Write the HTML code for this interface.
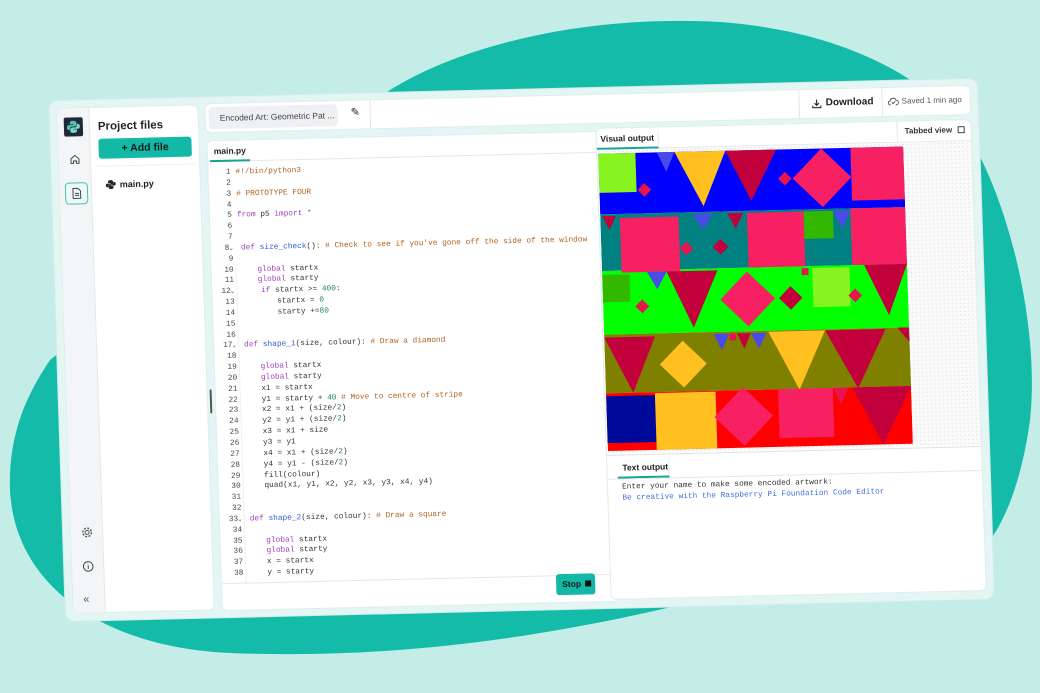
<!DOCTYPE html>
<html><head><meta charset="utf-8"><style>
*{box-sizing:border-box;margin:0;padding:0}
body{width:1040px;height:693px;overflow:hidden;background:#c4ede7;font-family:"Liberation Sans",sans-serif;position:relative}
#frame{position:absolute;left:0;top:0;width:930px;height:522px;transform-origin:0 0;transform:matrix(1,-0.0239,0.0326,1,48,100);background:#e4f6f4;border:1px solid #d2ece8;border-radius:10px}
.card{position:absolute;background:#fff;border-radius:5px;box-shadow:0 0 0 1px #dfeeed}
.mono{font-family:"Liberation Mono",monospace}
#code{position:absolute;left:0;top:24px;width:100%;height:418px;overflow:hidden;font-size:7.8px;line-height:10.84px;color:#333}
.ln{position:absolute;left:4px;width:18px;text-align:right;color:#444}
.cl{position:absolute;left:27px;white-space:pre}
.k{color:#9b3eb8}.f{color:#3355dd}.c{color:#b0611e}.n{color:#1f7f55}
</style></head><body>
<svg width="1040" height="693" style="position:absolute;left:0;top:0">
<path d="M390 90 C470 40 600 15 720 22 C830 30 920 70 965 130 C1010 200 1040 330 1030 420 C1022 480 1005 520 990 540 L700 600 C560 635 400 660 230 653 C110 648 15 590 10 490 C8 430 30 390 50 360 Z" fill="#14bba8"/>
</svg>
<div id="frame">
 <div class="card" style="left:8px;top:8px;width:140px;height:504px;overflow:hidden">
  <div style="position:absolute;left:0;top:0;width:32px;height:100%;background:#f4f5f7;border-right:1px solid #e6e8eb"></div>
  <div style="position:absolute;left:6px;top:9px;width:19px;height:19px;background:#1f2937;border-radius:2px">
   <svg width="19" height="19" viewBox="0 0 19 19"><path d="M9 3.5c-2 0-3 .8-3 2v1.5h3.5v.6H5c-1.3 0-2 1-2 2.4s.7 2.6 2 2.6h1v-1.6c0-1.1.9-2 2-2h3c1 0 1.6-.7 1.6-1.6V5.5c0-1.2-1.3-2-3.6-2z" fill="#4fc3b0"/><path d="M10 15.5c2 0 3-.8 3-2V12H9.5v-.6H14c1.3 0 2-1 2-2.4s-.7-2.6-2-2.6h-1V8c0 1.1-.9 2-2 2H8c-1 0-1.6.7-1.6 1.6v2.4c0 1.2 1.3 1.5 3.6 1.5z" fill="#7fd8c8"/></svg>
  </div>
  <svg style="position:absolute;left:10px;top:45px" width="12" height="12" viewBox="0 0 12 12"><path d="M2 5.5L6 2l4 3.5V10H7.5V7.5h-3V10H2z" fill="none" stroke="#444" stroke-width="1"/></svg>
  <div style="position:absolute;left:5px;top:74px;width:23px;height:22px;border:1.5px solid #3fc2b0;border-radius:4px;background:#eef9f7"></div>
  <svg style="position:absolute;left:11px;top:79px" width="11" height="12" viewBox="0 0 11 12"><path d="M2 1h5l2.5 2.5V11H2z M4 6h4M4 8h4" fill="none" stroke="#444" stroke-width="1"/></svg>
  <svg style="position:absolute;left:10px;top:418px" width="12" height="12" viewBox="0 0 12 12"><circle cx="6" cy="6" r="2" fill="none" stroke="#555"/><circle cx="6" cy="6" r="4.3" fill="none" stroke="#555" stroke-width="1.4" stroke-dasharray="2 1.4"/></svg>
  <svg style="position:absolute;left:10px;top:452px" width="12" height="12" viewBox="0 0 12 12"><circle cx="6" cy="6" r="4.8" fill="none" stroke="#444"/><path d="M6 5v3.5M6 3.3v.6" stroke="#444"/></svg>
  <div style="position:absolute;left:10px;top:485px;font-size:11px;color:#555">«</div>
  <div style="position:absolute;left:40px;top:13px;font-size:11.5px;font-weight:bold;color:#1f2328">Project files</div>
  <div style="position:absolute;left:40px;top:31px;width:93px;height:20px;background:#14b8a6;border-radius:3px;color:#0e1d1b;font-size:10.5px;font-weight:bold;text-align:center;line-height:20px">+ Add file</div>
  <div style="position:absolute;left:36px;top:58px;width:100px;border-top:1px solid #eceef0"></div>
  <svg style="position:absolute;left:46px;top:72px" width="10" height="10" viewBox="0 0 19 19"><path d="M9 1c-3 0-4.5 1-4.5 3v2.5h5v1H3C1 7.5 0 9 0 11s1 3.5 3 3.5h1.5v-2.5c0-1.5 1.2-2.7 2.7-2.7h4.5c1.4 0 2.300-1 2.3-2.3V4c0-2-2-3-5-3z M10 18c3 0 4.5-1 4.5-3v-2.5h-5v-1H16c2 0 3-1.5 3-3.5s-1-3.5-3-3.5h-1.5V7c0 1.5-1.2 2.7-2.7 2.7H7.3C5.9 9.7 5 10.7 5 12v3c0 2 2 3 5 3z" fill="#222"/></svg>
  <div style="position:absolute;left:60px;top:72px;font-size:9px;font-weight:bold;color:#222">main.py</div>
 </div>
 <div class="card" style="left:156px;top:7px;width:764px;height:28px">
  <div style="position:absolute;left:3px;top:3px;width:129px;height:22px;background:#eff0f2;border-radius:4px;font-size:8.5px;color:#444;line-height:22px;padding-left:11px">Encoded Art: Geometric Pat ...</div>
  <div style="position:absolute;left:145px;top:5px;font-size:11px;color:#222">✎</div>
  <div style="position:absolute;left:164px;top:0;height:28px;border-left:1px solid #e5e7ea"></div>
  <div style="position:absolute;left:593px;top:0;height:28px;border-left:1px solid #e5e7ea"></div>
  <svg style="position:absolute;left:606px;top:9px" width="10" height="10" viewBox="0 0 10 10"><path d="M5 1v5.5M2.8 4.5L5 6.7 7.2 4.5M1 7v2h8V7" fill="none" stroke="#222" stroke-width="1.1"/></svg>
  <div style="position:absolute;left:620px;top:8px;font-size:10px;font-weight:bold;color:#222">Download</div>
  <div style="position:absolute;left:676px;top:0;height:28px;border-left:1px solid #e5e7ea"></div>
  <svg style="position:absolute;left:682px;top:9px" width="11" height="9" viewBox="0 0 11 9"><path d="M3 8H2.5A2 2 0 0 1 2.5 4 3 3 0 0 1 8.3 3.4 2.3 2.3 0 0 1 8.5 8H8M4 5.5l1.3 1.3L7.5 4.5" fill="none" stroke="#444" stroke-width="0.9"/></svg>
  <div style="position:absolute;left:696px;top:9px;font-size:8px;color:#555">Saved 1 min ago</div>
 </div>
 <div class="card" style="left:157px;top:44px;width:396px;height:469px;overflow:hidden">
  <div style="position:absolute;left:0;top:20px;width:100%;border-top:1px solid #e6e8ea"></div>
  <div style="position:absolute;left:2px;top:3px;width:40px;height:18px;border-bottom:2px solid #14a394;font-size:8.5px;font-weight:bold;color:#222;text-align:center;line-height:15px">main.py</div>
  <div id="code" class="mono">
  <div style="position:absolute;left:24px;top:100px;height:330px;border-left:1px solid #f0f0f0"></div>
  </div>
  <div style="position:absolute;left:0;top:442px;width:100%;border-top:1px solid #e6e8ea"></div>
  <div style="position:absolute;left:334px;top:441px;width:39px;height:21px;background:#14b8a6;border-radius:3px;font-size:8.5px;font-weight:bold;color:#0c1a18;line-height:21px;padding-left:6px">Stop <span style="display:inline-block;width:6px;height:6px;background:#111;margin-left:2px"></span></div>
 </div>
 <div style="position:absolute;left:151px;top:292px;width:2px;height:24px;background:#555;border-radius:1px"></div>
 <div style="position:absolute;left:549px;top:292px;width:2px;height:24px;background:#555;border-radius:1px"></div>
 <div class="card" style="left:546px;top:41px;width:374px;height:470px;overflow:hidden">
  <div style="position:absolute;left:0;top:20px;width:100%;border-top:1px solid #e6e8ea"></div>
  <div style="position:absolute;left:0;top:2px;width:62px;height:19px;border-bottom:2px solid #14a394;border-right:1px solid #e6e8ea;font-size:8.5px;font-weight:bold;color:#222;text-align:center;line-height:17px">Visual output</div>
  <div style="position:absolute;left:300px;top:0;width:74px;height:20px;border-left:1px solid #e6e8ea;font-size:8px;font-weight:bold;color:#333;line-height:20px;padding-left:7px">Tabbed view <span style="display:inline-block;width:7px;height:7px;border:1px solid #444;margin-left:3px;vertical-align:-1px"></span></div>
  <div style="position:absolute;left:0;top:21px;width:100%;height:304px;background-color:#fafafa;background-image:radial-gradient(#e2e2e2 0.6px,transparent 0.7px);background-size:4px 4px"></div>
  <svg style="position:absolute;left:1px;top:21px" width="305" height="305" viewBox="0 0 312 304">
   <rect width="312" height="62" fill="#0000ff"/>
   <rect y="62" width="312" height="58" fill="#008080"/>
   <rect y="120" width="312" height="65" fill="#00ff00"/>
   <rect y="185" width="312" height="60" fill="#808000"/>
   <rect y="245" width="312" height="59" fill="#ff0000"/>
   <rect x="0" y="0" width="38" height="40" fill="#88f41f"/>
   <polygon points="46,31 53,38 46,45 39,38" fill="#e6154e"/>
   <polygon points="60,0 78,0 69,20" fill="#4a4ae8"/>
   <polygon points="78,0 130,0 106,56" fill="#ffc020"/>
   <polygon points="130,0 182,0 155,52" fill="#c2003c"/>
   <polygon points="190,23 197,30 190,37 183,30" fill="#e6154e"/>
   <polygon points="228,0 258,30 228,60 198,30" fill="#f72063"/>
   <rect x="258" y="0" width="54" height="54" fill="#f72063"/>
   <polygon points="2,64 16,64 9,78" fill="#c2003c"/>
   <rect x="20" y="66" width="60" height="56" fill="#f72063"/>
   <polygon points="95,64 115,64 105,80" fill="#4a4ae8"/>
   <polygon points="130,64 146,64 138,80" fill="#c2003c"/>
   <polygon points="87,92 94,99 87,106 80,99" fill="#e6154e"/>
   <polygon points="122,90 130,98 122,106 114,98" fill="#c2003c"/>
   <rect x="150" y="64" width="58" height="56" fill="#f72063"/>
   <rect x="208" y="64" width="30" height="28" fill="#33b800"/>
   <polygon points="238,64 256,64 247,82" fill="#4a4ae8"/>
   <rect x="256" y="62" width="56" height="58" fill="#f72063"/>
   <rect x="0" y="124" width="28" height="28" fill="#33b800"/>
   <polygon points="46,122 66,122 56,140" fill="#4a4ae8"/>
   <polygon points="40,150 47,157 40,164 33,157" fill="#e6154e"/>
   <polygon points="66,122 118,122 92,180" fill="#c2003c"/>
   <polygon points="148,124 176,152 148,180 120,152" fill="#f72063"/>
   <polygon points="192,140 204,152 192,164 180,152" fill="#c2003c"/>
   <rect x="204" y="122" width="7" height="7" fill="#e6154e"/>
   <rect x="215" y="122" width="38" height="40" fill="#88f41f"/>
   <polygon points="258,144 265,151 258,158 251,151" fill="#e6154e"/>
   <polygon points="268,120 312,120 292,172" fill="#c2003c"/>
   <polygon points="0,188 52,188 28,245" fill="#c2003c"/>
   <polygon points="80,193 104,217 80,241 56,217" fill="#ffc020"/>
   <polygon points="112,187 128,187 120,204" fill="#4a4ae8"/>
   <rect x="128" y="187" width="7" height="7" fill="#e6154e"/>
   <polygon points="136,187 150,187 143,203" fill="#c2003c"/>
   <polygon points="150,187 166,187 158,203" fill="#4a4ae8"/>
   <polygon points="168,186 226,186 198,246" fill="#ffc020"/>
   <polygon points="226,186 288,186 258,246" fill="#c2003c"/>
   <polygon points="288,186 312,186 312,245" fill="#808000"/>
   <polygon points="300,185 312,185 312,200" fill="#c2003c"/>
   <rect x="0" y="248" width="50" height="48" fill="#000a9a"/>
   <rect x="50" y="246" width="62" height="58" fill="#ffc020"/>
   <polygon points="140,242 170,272 140,302 110,272" fill="#f72063"/>
   <rect x="176" y="245" width="56" height="50" fill="#f72063"/>
   <polygon points="232,245 248,245 240,262" fill="#e6154e"/>
   <polygon points="252,245 312,245 282,304" fill="#c2003c"/>
  </svg>
  <div style="position:absolute;left:0;top:326px;width:100%;border-top:1px solid #dfe1e4"></div>
  <div style="position:absolute;left:10px;top:331px;width:52px;height:19px;border-bottom:2px solid #14a394;border-right:1px solid #e6e8ea;font-size:8.5px;font-weight:bold;color:#222;line-height:17px;padding-left:5px">Text output</div>
  <div style="position:absolute;left:0;top:350px;width:100%;border-top:1px solid #e6e8ea"></div>
  <div class="mono" style="position:absolute;left:14px;top:354px;font-size:7.8px;line-height:11px;color:#333;white-space:pre">Enter your name to make some encoded artwork:
<span style="color:#3d6fe0">Be creative with the Raspberry Pi Foundation Code Editor</span></div>
 </div>
</div>
<script>
const L=[
'<span class="c">#!/bin/python3</span>','',
'<span class="c"># PROTOTYPE FOUR</span>','',
'<span class="k">from</span> p5 <span class="k">import</span> <span class="c">*</span>','','',
'<span class="k">def</span> <span class="f">size_check</span>(): <span class="c"># Check to see if you\'ve gone off the side of the window</span>','',
'    <span class="k">global</span> startx','    <span class="k">global</span> starty','    <span class="k">if</span> startx >= <span class="n">400</span>:','        startx = <span class="n">0</span>','        starty +=<span class="n">80</span>','','',
'<span class="k">def</span> <span class="f">shape_1</span>(size, colour): <span class="c"># Draw a diamond</span>','',
'    <span class="k">global</span> startx','    <span class="k">global</span> starty','    x1 = startx','    y1 = starty + <span class="n">40</span> <span class="c"># Move to centre of stripe</span>',
'    x2 = x1 + (size/<span class="n">2</span>)','    y2 = y1 + (size/<span class="n">2</span>)','    x3 = x1 + size','    y3 = y1','    x4 = x1 + (size/<span class="n">2</span>)','    y4 = y1 - (size/<span class="n">2</span>)','    fill(colour)','    quad(x1, y1, x2, y2, x3, y3, x4, y4)','','',
'<span class="k">def</span> <span class="f">shape_2</span>(size, colour): <span class="c"># Draw a square</span>','',
'    <span class="k">global</span> startx','    <span class="k">global</span> starty','    x = startx','    y = starty'];
const fold={8:1,12:1,17:1,33:1};
let h='';
L.forEach((t,i)=>{const y=(i*10.84+3).toFixed(2);h+=`<div class="ln" style="top:${y}px">${i+1}${fold[i+1]?'<span style="font-size:6px">⌄</span>':''}</div><div class="cl" style="top:${y}px;${fold[i+1]?'left:30px':''}">${t}</div>`;});
document.getElementById('code').insertAdjacentHTML('beforeend',h);
</script>
</body></html>
